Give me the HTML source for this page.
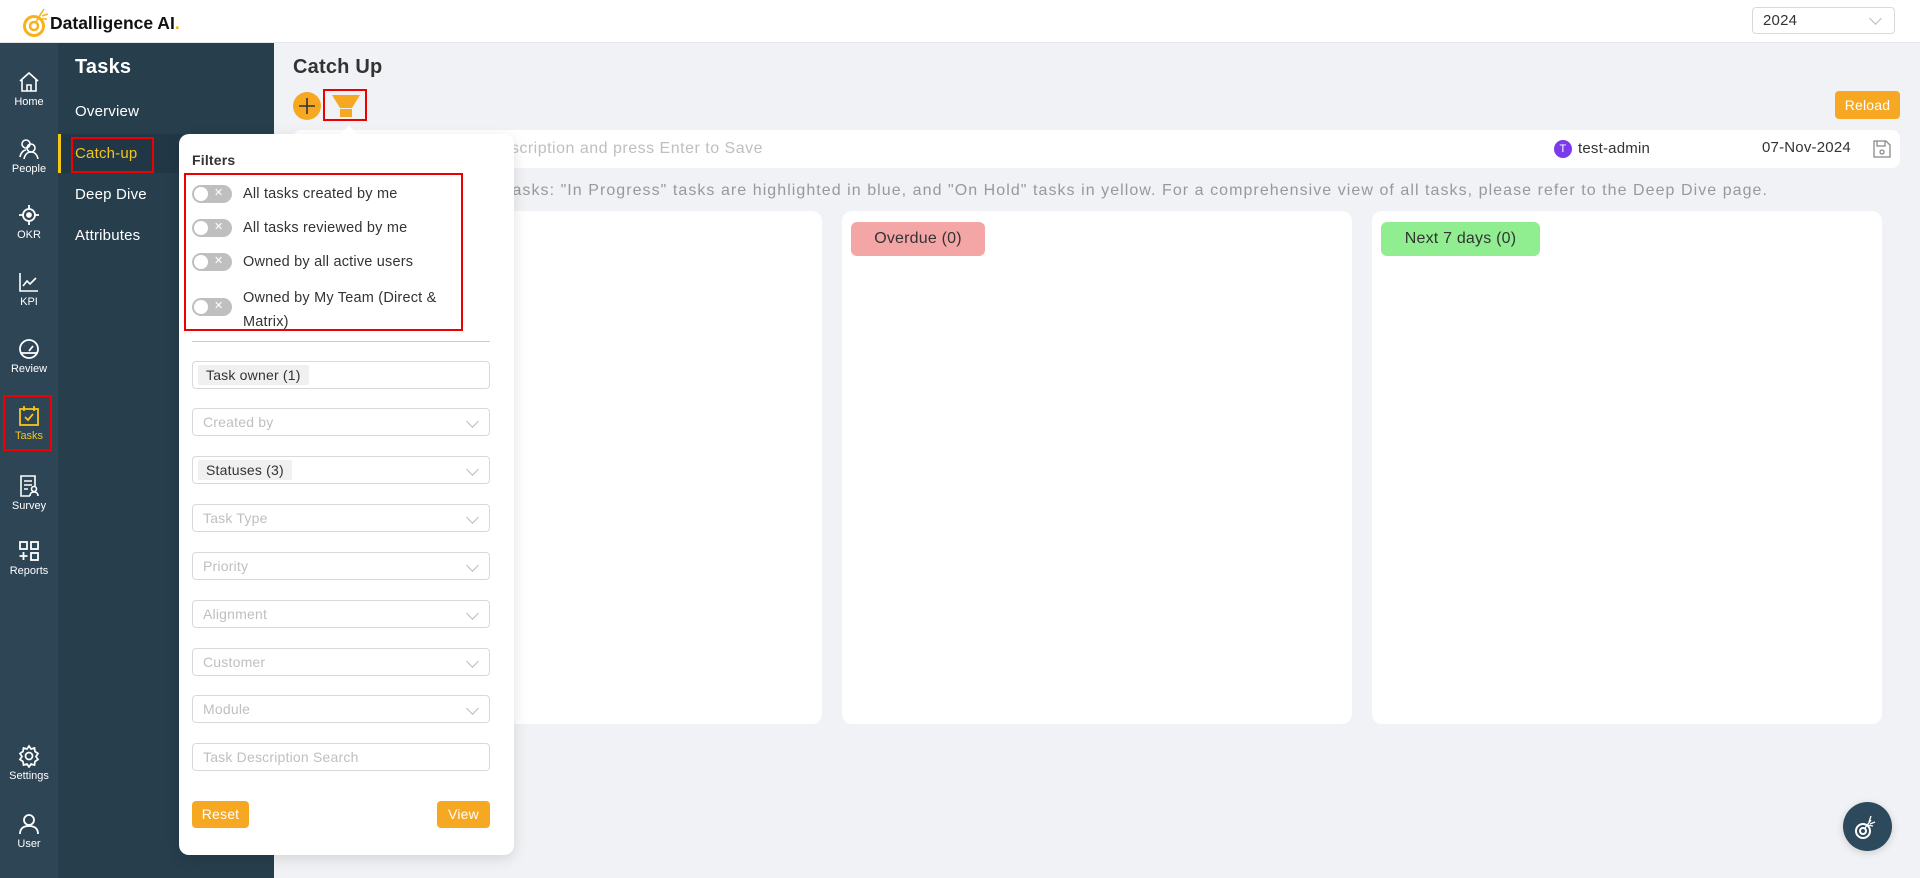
<!DOCTYPE html>
<html><head><meta charset="utf-8">
<style>
*{box-sizing:border-box;margin:0;padding:0}
body{width:1920px;height:878px;overflow:hidden;background:#f0f2f5;font-family:"Liberation Sans",sans-serif;position:relative;color:#333;letter-spacing:0.2px}
.abs{position:absolute}
#hdr{left:0;top:0;width:1920px;height:43px;background:#fff;border-bottom:1px solid #e4e6ea}
#rail{left:0;top:43px;width:58px;height:835px;background:#2d4555}
#sub{left:58px;top:43px;width:216px;height:835px;background:#273e4d}
.ri{position:absolute;left:0;width:58px;text-align:center;color:#fff;font-size:11px;letter-spacing:0}
.ri svg{display:block;margin:0 auto 2px}
.sm{position:absolute;left:75px;color:#fff;font-size:15px}
.card{background:#fff;border-radius:10px;position:absolute}
.fld{position:absolute;left:192px;width:298px;height:28px;border:1px solid #d9d9d9;border-radius:4px;background:#fff;font-size:14px;color:#bfbfbf;padding-left:10px;line-height:26px}
.fld .ch{position:absolute;right:12px;top:8px;width:9px;height:9px;border-right:1px solid #bbb;border-bottom:1px solid #bbb;transform:rotate(45deg)}
.tag{position:absolute;left:5px;top:3px;height:20px;background:#f0f0f0;color:#333;line-height:20px;padding:0 8px;border-radius:2px}
.tg{position:absolute;left:192px;width:40px;height:18px;border-radius:9px;background:#bfbfbf}
.tg:before{content:"";position:absolute;left:2px;top:2px;width:14px;height:14px;border-radius:50%;background:#fff}
.tg:after{content:"✕";position:absolute;left:22px;top:1px;font-size:11px;color:#fff}
.tl{position:absolute;left:243px;font-size:14.5px;color:#333}
.btn{position:absolute;background:#f7a823;color:#fff;border-radius:4px;font-size:14px;text-align:center}
</style></head><body>
<div id="hdr" class="abs">
 <svg class="abs" style="left:21px;top:5px" width="32" height="33" viewBox="0 0 32 33"><circle cx="13" cy="21" r="9.5" fill="none" stroke="#f7b21b" stroke-width="3"/><circle cx="13" cy="21" r="4" fill="none" stroke="#f7b21b" stroke-width="2.5"/><path d="M15 17 L21 7 M19 10 L23 4 M21 11 L27 9 M18 14 L26 14" stroke="#f7b21b" stroke-width="1.5" fill="none"/></svg>
 <div class="abs" style="left:50px;top:13px;font-size:17.5px;font-weight:bold;color:#111;letter-spacing:0">Datalligence AI<span style="color:#f7a823">.</span></div>
 <div class="abs" style="left:1752px;top:7px;width:143px;height:27px;border:1px solid #d9d9d9;border-radius:4px;font-size:15px;line-height:25px;padding-left:10px;color:#333">2024<span style="position:absolute;right:14px;top:6px;width:9px;height:9px;border-right:1px solid #bbb;border-bottom:1px solid #bbb;transform:rotate(45deg)"></span></div>
</div>
<div id="rail" class="abs"></div>
<div id="sub" class="abs"></div>
<div class="ri" style="top:70px"><svg width="24" height="24" viewBox="0 0 24 24" fill="none" stroke="#fff" stroke-width="1.6"><path d="M3 11 L12 3 L21 11 M5 9 V21 H19 V9 M10 21 V15 H14 V21"/></svg>Home</div>
<div class="ri" style="top:137px"><svg width="24" height="24" viewBox="0 0 24 24" fill="none" stroke="#fff" stroke-width="1.6"><circle cx="9" cy="7" r="4"/><circle cx="14" cy="11" r="4"/><path d="M3 20c1-5 4-7 6-7 M7 22c1-5 4-7 7-7s6 2 7 7"/></svg>People</div>
<div class="ri" style="top:203px"><svg width="24" height="24" viewBox="0 0 24 24" fill="none" stroke="#fff" stroke-width="1.8"><circle cx="12" cy="12" r="6"/><circle cx="12" cy="12" r="2" fill="#fff"/><path d="M12 2v4M12 18v4M2 12h4M18 12h4"/></svg>OKR</div>
<div class="ri" style="top:270px"><svg width="24" height="24" viewBox="0 0 24 24" fill="none" stroke="#fff" stroke-width="1.6"><path d="M3 3 V21 H21 M6 16 L10 11 L13 14 L19 8"/></svg>KPI</div>
<div class="ri" style="top:337px"><svg width="24" height="24" viewBox="0 0 24 24" fill="none" stroke="#fff" stroke-width="1.8"><circle cx="12" cy="12" r="9"/><path d="M3.5 16 H20.5 M12 14 L16 9 M7 9h.1M12 6h.1"/></svg>Review</div>
<div class="abs" style="left:3px;top:395px;width:49px;height:56px;border:2px solid #e00"></div>
<div class="ri" style="top:404px;color:#f5c518"><svg width="24" height="24" viewBox="0 0 24 24" fill="none" stroke="#f5c518" stroke-width="1.8"><rect x="3" y="5" width="18" height="16"/><path d="M7 2v5M17 2v5M8 13l3 3 5-6"/></svg>Tasks</div>
<div class="ri" style="top:474px"><svg width="24" height="24" viewBox="0 0 24 24" fill="none" stroke="#fff" stroke-width="1.6"><path d="M13 22 H4 V2 H18 V12 M7 7h8M7 11h8M7 15h4"/><circle cx="17" cy="15" r="2.5"/><path d="M13 22c0-3 2-4 4-4s4 1 4 4"/></svg>Survey</div>
<div class="ri" style="top:539px"><svg width="24" height="24" viewBox="0 0 24 24" fill="none" stroke="#fff" stroke-width="1.8"><rect x="3" y="3" width="7" height="7"/><rect x="14" y="3" width="7" height="7"/><rect x="14" y="14" width="7" height="7"/><path d="M6.5 13v8M2.5 17h8"/></svg>Reports</div>
<div class="ri" style="top:744px"><svg width="24" height="24" viewBox="0 0 24 24" fill="none" stroke="#fff" stroke-width="1.7"><circle cx="12" cy="12" r="3.5"/><path d="M12 2l2 3 3.5-1 .5 3.5 3 2-2 3 2 3-3 2-.5 3.5-3.5-1-2 3-2-3-3.5 1-.5-3.5-3-2 2-3-2-3 3-2 .5-3.5 3.5 1z"/></svg>Settings</div>
<div class="ri" style="top:812px"><svg width="24" height="24" viewBox="0 0 24 24" fill="none" stroke="#fff" stroke-width="1.8"><circle cx="12" cy="8" r="5"/><path d="M3 22c0-6 4-8 9-8s9 2 9 8"/></svg>User</div>
<div class="sm" style="top:56px;font-size:20px;font-weight:bold">Tasks</div>
<div class="sm" style="top:103px">Overview</div>
<div class="abs" style="left:58px;top:134px;width:216px;height:39px;background:#223746"></div>
<div class="abs" style="left:58px;top:134px;width:3px;height:39px;background:#f5c518"></div>
<div class="abs" style="left:71px;top:137px;width:83px;height:36px;border:2px solid #e00"></div>
<div class="sm" style="top:145px;color:#f5c518">Catch-up</div>
<div class="sm" style="top:186px">Deep Dive</div>
<div class="sm" style="top:227px">Attributes</div>
<div class="abs" style="left:293px;top:56px;font-size:20px;font-weight:bold;color:#333">Catch Up</div>
<div class="abs" style="left:293px;top:92px;width:28px;height:28px;border-radius:50%;background:#f7a823"><svg width="28" height="28"><path d="M14 6v16M6 14h16" stroke="#333" stroke-width="1.6"/></svg></div>
<svg class="abs" style="left:331px;top:94px" width="30" height="24" viewBox="0 0 30 24"><path d="M1 1 H29 L21 14 H9 Z" fill="#f7a823"/><rect x="9" y="15" width="12" height="8" fill="#f7a823"/></svg>
<div class="abs" style="left:323px;top:89px;width:44px;height:32px;border:2px solid #e00"></div>
<div class="btn" style="left:1835px;top:91px;width:65px;height:28px;line-height:28px">Reload</div>
<div class="card" style="left:293px;top:130px;width:1607px;height:38px;border-radius:8px">
 <div class="abs" style="right:1137px;top:10px;font-size:16px;color:#bfbfbf;white-space:nowrap;letter-spacing:0.5px">Enter Task Description and press Enter to Save</div>
 <div class="abs" style="left:1261px;top:10px;width:18px;height:18px;border-radius:50%;background:#7c3aed;color:#fff;font-size:11px;text-align:center;line-height:18px">T</div>
 <div class="abs" style="left:1285px;top:10px;font-size:15px;color:#333">test-admin</div>
 <div class="abs" style="left:1469px;top:9px;font-size:15px;color:#333">07-Nov-2024</div>
 <svg class="abs" style="left:1580px;top:10px" width="18" height="18" viewBox="0 0 18 18" fill="none" stroke="#888" stroke-width="1.3"><path d="M1 1H13L17 5V17H1Z M4 1V6H12V1"/><circle cx="9" cy="12" r="2"/></svg>
</div>
<div class="abs" style="right:152px;top:182px;font-size:16px;color:#999;white-space:nowrap;letter-spacing:1.05px">This page shows the upcoming tasks: "In Progress" tasks are highlighted in blue, and "On Hold" tasks in yellow. For a comprehensive view of all tasks, please refer to the Deep Dive page.</div>
<div class="card" style="left:293px;top:211px;width:529px;height:513px"></div>
<div class="card" style="left:842px;top:211px;width:510px;height:513px"><div class="abs" style="left:9px;top:11px;width:134px;height:34px;background:#f4a6a6;border-radius:6px;font-size:16px;line-height:34px;text-align:center">Overdue (0)</div></div>
<div class="card" style="left:1372px;top:211px;width:510px;height:513px"><div class="abs" style="left:9px;top:11px;width:159px;height:34px;background:#90ee90;border-radius:6px;font-size:16px;line-height:34px;text-align:center">Next 7 days (0)</div></div>
<div class="abs" style="left:1843px;top:802px;width:49px;height:49px;border-radius:50%;background:#2d4a5c;box-shadow:0 2px 8px rgba(0,0,0,.15)"><svg width="49" height="49" viewBox="0 0 49 49" fill="none" stroke="#fff"><circle cx="20" cy="29" r="7" stroke-width="2"/><circle cx="20" cy="29" r="3" stroke-width="2"/><path d="M22 26 L28 18 M26 20 L28 14 M27 22 L32 20 M24 23 L30 24" stroke-width="1.3"/></svg></div>
<div class="abs" style="left:179px;top:134px;width:335px;height:721px;background:#fff;border-radius:10px;box-shadow:0 4px 14px rgba(0,0,0,.12)"></div>
<div class="abs" style="left:343px;top:128px;width:12px;height:12px;background:#fff;transform:rotate(45deg)"></div>
<div class="abs" style="left:192px;top:152px;font-size:14px;font-weight:bold;color:#333">Filters</div>
<div class="abs" style="left:184px;top:173px;width:279px;height:158px;border:2px solid #e00"></div>
<div class="tg" style="top:185px"></div><div class="tl" style="top:186px">All tasks created by me</div>
<div class="tg" style="top:219px"></div><div class="tl" style="top:220px">All tasks reviewed by me</div>
<div class="tg" style="top:253px"></div><div class="tl" style="top:254px">Owned by all active users</div>
<div class="tg" style="top:298px"></div><div class="tl" style="top:286px;line-height:24px">Owned by My Team (Direct &amp;<br>Matrix)</div>
<div class="abs" style="left:192px;top:341px;width:298px;height:1px;background:#ccc"></div>
<div class="fld" style="top:361px"><span class="tag">Task owner (1)</span></div>
<div class="fld" style="top:408px">Created by<span class="ch"></span></div>
<div class="fld" style="top:456px"><span class="tag">Statuses (3)</span><span class="ch"></span></div>
<div class="fld" style="top:504px">Task Type<span class="ch"></span></div>
<div class="fld" style="top:552px">Priority<span class="ch"></span></div>
<div class="fld" style="top:600px">Alignment<span class="ch"></span></div>
<div class="fld" style="top:648px">Customer<span class="ch"></span></div>
<div class="fld" style="top:695px">Module<span class="ch"></span></div>
<div class="fld" style="top:743px">Task Description Search</div>
<div class="btn" style="left:192px;top:801px;width:57px;height:27px;line-height:27px">Reset</div>
<div class="btn" style="left:437px;top:801px;width:53px;height:27px;line-height:27px">View</div>
</body></html>
